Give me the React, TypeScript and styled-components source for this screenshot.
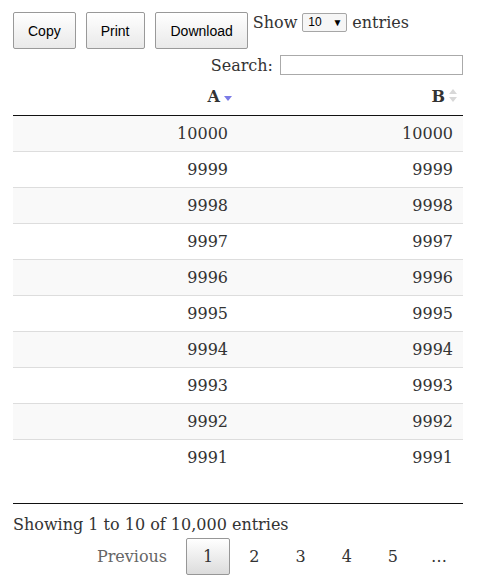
import styled, { createGlobalStyle } from "styled-components";

const GlobalStyle = createGlobalStyle`
  body {
    margin: 8px;
    background: #fff;
    font-family: "DejaVu Serif", serif;
    font-size: 16px;
    color: #333;
  }
`;

const rows = [10000, 9999, 9998, 9997, 9996, 9995, 9994, 9993, 9992, 9991];

function App() {
  return (
    <>
      <GlobalStyle />
      <Wrapper>
        <TopBar>
          <ButtonGroup>
            <ToolButton>Copy</ToolButton>
            <ToolButton $extra={1}>Print</ToolButton>
            <ToolButton>Download</ToolButton>
          </ButtonGroup>
          <LengthLabel>
            Show
            <FakeSelect>
              <span>10</span>
              <SelectArrow>▼</SelectArrow>
            </FakeSelect>
            entries
          </LengthLabel>
        </TopBar>
        <SearchRow>
          <label>Search:</label>
          <SearchInput />
        </SearchRow>
        <Table>
          <thead>
            <tr>
              <HeadCell>
                A
                <SortIcon>
                  <svg width="8" height="16" viewBox="0 0 8 16">
                    <path d="M0 8 L8 8 L4 13 Z" fill="#7b7be6" />
                  </svg>
                </SortIcon>
              </HeadCell>
              <HeadCell>
                B
                <SortIcon>
                  <svg width="8" height="16" viewBox="0 0 8 16">
                    <path d="M4 1 L8 6 L0 6 Z" fill="#d8d8d8" />
                    <path d="M0 9 L8 9 L4 14 Z" fill="#d8d8d8" />
                  </svg>
                </SortIcon>
              </HeadCell>
            </tr>
          </thead>
          <tbody>
            {rows.map((n, i) => (
              <BodyRow key={n} $odd={i % 2 === 0}>
                <Cell>{n}</Cell>
                <Cell>{n}</Cell>
              </BodyRow>
            ))}
          </tbody>
        </Table>
        <TableFoot />
        <Info>Showing 1 to 10 of 10,000 entries</Info>
        <Pager>
          <PageButton $disabled>Previous</PageButton>
          <PageButton $current>1</PageButton>
          <PageButton>2</PageButton>
          <PageButton>3</PageButton>
          <PageButton>4</PageButton>
          <PageButton>5</PageButton>
          <Ellipsis>…</Ellipsis>
        </Pager>
      </Wrapper>
    </>
  );
}

const Wrapper = styled.div`
  width: 450px;
  padding: 4px 5px 0;
`;

const TopBar = styled.div`
  display: flex;
  align-items: flex-start;
`;

const ButtonGroup = styled.div`
  display: flex;
  gap: 10px;
  margin-right: 5px;
`;

const ToolButton = styled.button<{ $extra?: number }>`
  height: 37px;
  padding: 0 ${(p) => 14 + (p.$extra || 0)}px 0 14px;
  border: 1px solid #999;
  border-radius: 2px;
  background: linear-gradient(to bottom, #ffffff 0%, #e9e9e9 100%);
  font-family: "Liberation Sans", Arial, sans-serif;
  font-size: 14px;
  color: #000;
  cursor: pointer;
`;

const LengthLabel = styled.div`
  display: flex;
  align-items: flex-start;
  gap: 5px;
  line-height: 19px;
  margin-top: 1px;
`;

const FakeSelect = styled.div`
  display: flex;
  align-items: center;
  justify-content: space-between;
  box-sizing: border-box;
  width: 45px;
  height: 19px;
  padding: 0 4px 0 5px;
  border: 1px solid #a6a6a6;
  border-radius: 2px;
  background: #f6f6f6;
  font-family: "Liberation Sans", Arial, sans-serif;
  font-size: 12px;
  color: #000;
`;

const SelectArrow = styled.span`
  font-size: 10px;
`;

const SearchRow = styled.div`
  display: flex;
  justify-content: flex-end;
  align-items: center;
  gap: 7px;
  margin-top: 6px;
  line-height: 19px;
`;

const SearchInput = styled.input`
  box-sizing: border-box;
  width: 183px;
  height: 20px;
  margin: 0;
  border: 1px solid #aaa;
  background: #fff;
`;

const Table = styled.table`
  width: 100%;
  border-collapse: collapse;
  margin-top: 2px;
`;

const HeadCell = styled.th`
  position: relative;
  width: 50%;
  padding: 10px 18px 9px 10px;
  text-align: right;
  font-weight: bold;
  line-height: 19px;
  border-bottom: 1px solid #111;
`;

const SortIcon = styled.span`
  position: absolute;
  right: 6px;
  top: 11px;
  line-height: 0;
`;

const BodyRow = styled.tr<{ $odd: boolean }>`
  background: ${(p) => (p.$odd ? "#f9f9f9" : "#fff")};
  & > td {
    border-top: 1px solid #ddd;
  }
  &:first-child > td {
    border-top: none;
  }
`;

const Cell = styled.td`
  padding: 8px 10px;
  text-align: right;
  line-height: 19px;
`;

const TableFoot = styled.div`
  height: 28px;
  border-bottom: 1px solid #111;
`;

const Info = styled.div`
  padding-top: 11px;
  line-height: 19px;
`;

const Pager = styled.div`
  display: flex;
  justify-content: flex-end;
  align-items: center;
  padding-top: 4px;
`;

const PageButton = styled.div<{ $current?: boolean; $disabled?: boolean }>`
  box-sizing: border-box;
  min-width: 24px;
  padding: 8px 16px;
  margin-left: 2px;
  line-height: 19px;
  text-align: center;
  border: 1px solid ${(p) => (p.$current ? "#979797" : "transparent")};
  border-radius: 2px;
  color: ${(p) => (p.$disabled ? "#666" : "#333")};
  background: ${(p) =>
    p.$current ? "linear-gradient(to bottom, #ffffff 0%, #dcdcdc 100%)" : "transparent"};
  cursor: ${(p) => (p.$disabled ? "default" : "pointer")};
`;

const Ellipsis = styled.span`
  padding: 0 16px;
  line-height: 19px;
`;

export default App;
